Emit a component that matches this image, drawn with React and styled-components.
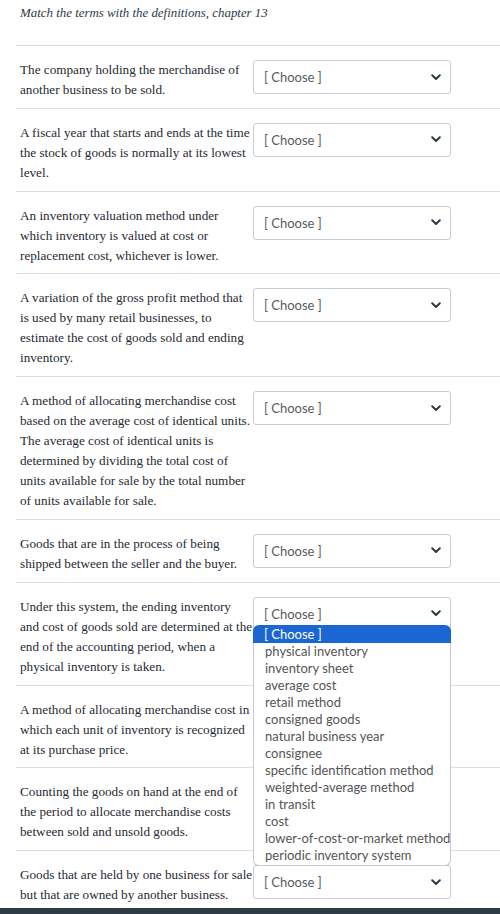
import React from "react";
import styled, { createGlobalStyle } from "styled-components";

const Global = createGlobalStyle`
  html, body { margin: 0; padding: 0; background: #fff; }
  body { font-family: "Liberation Serif", "Times New Roman", serif; color: #2d3b45; }
`;

const Page = styled.div`
  width: 500px;
  display: flex;
  flex-direction: column;
`;

const Title = styled.div`
  font-style: italic;
  font-size: 12.9px;
  line-height: 16px;
  padding: 5px 0 0 20px;
  height: 45px;
  box-sizing: border-box;
  color: #2d3b45;
`;

const List = styled.div`
  margin-left: 16px;
  display: flex;
  flex-direction: column;
`;

const Row = styled.div`
  border-top: 1px solid #dcdfe1;
  padding: 14px 0 ${(p) => (p.$last ? "3px" : "7.8px")} 4px;
  display: grid;
  grid-template-columns: 233px 198px;
  align-items: start;
`;

const Question = styled.div`
  font-size: 13.2px;
  line-height: 20px;
  color: #1f2a33;
`;

const SelectWrap = styled.div`
  position: relative;
`;

const SelectBox = styled.div`
  height: 34px;
  box-sizing: border-box;
  border: 1px solid #c7cdd1;
  border-radius: 3px;
  background: #fff;
  display: flex;
  align-items: center;
  justify-content: space-between;
  padding: 0 9px 0 10px;
  font-family: Lato, "Noto Sans", sans-serif;
  font-size: 13px;
  color: #5a5a5a;
`;

const Chevron = styled.svg`
  width: 10px;
  height: 7px;
  flex: none;
`;

const Menu = styled.ul`
  position: absolute;
  top: 28px;
  left: 0;
  width: 198px;
  margin: 0;
  padding: 0 0 1px 0;
  list-style: none;
  background: #fff;
  border: 1px solid #c9c9c9;
  border-top: none;
  border-radius: 6px;
  box-sizing: border-box;
  z-index: 5;
  font-family: Lato, "Noto Sans", sans-serif;
  font-size: 13px;
`;

const Option = styled.li`
  height: ${(p) => (p.$active ? 18 : 17)}px;
  line-height: ${(p) => (p.$active ? 18 : 17)}px;
  padding-left: 11px;
  white-space: nowrap;
  color: ${(p) => (p.$active ? "#fff" : "#555")};
  background: ${(p) => (p.$active ? "#1a66d2" : "transparent")};
  border-radius: ${(p) => (p.$active ? "6px 6px 0 0" : "0")};
  margin: ${(p) => (p.$active ? "0 -1px" : "0")};
`;

const Footer = styled.div`
  height: 40px;
  background: #2d3b45;
`;

const options = [
  "[ Choose ]",
  "physical inventory",
  "inventory sheet",
  "average cost",
  "retail method",
  "consigned goods",
  "natural business year",
  "consignee",
  "specific identification method",
  "weighted-average method",
  "in transit",
  "cost",
  "lower-of-cost-or-market method",
  "periodic inventory system",
];

const questions = [
  "The company holding the merchandise of another business to be sold.",
  "A fiscal year that starts and ends at the time the stock of goods is normally at its lowest level.",
  "An inventory valuation method under which inventory is valued at cost or replacement cost, whichever is lower.",
  "A variation of the gross profit method that is used by many retail businesses, to estimate the cost of goods sold and ending inventory.",
  "A method of allocating merchandise cost based on the average cost of identical units. The average cost of identical units is determined by dividing the total cost of units available for sale by the total number of units available for sale.",
  "Goods that are in the process of being shipped between the seller and the buyer.",
  "Under this system, the ending inventory and cost of goods sold are determined at the end of the accounting period, when a physical inventory is taken.",
  "A method of allocating merchandise cost in which each unit of inventory is recognized at its purchase price.",
  "Counting the goods on hand at the end of the period to allocate merchandise costs between sold and unsold goods.",
  "Goods that are held by one business for sale but that are owned by another business.",
];

function Select({ open }) {
  return (
    <SelectWrap>
      <SelectBox>
        <span>[ Choose ]</span>
        <Chevron viewBox="0 0 10 7">
          <path d="M1.2 1.3 L5 5 L8.8 1.3" fill="none" stroke="#2d3b45" strokeWidth="2" strokeLinecap="round" strokeLinejoin="round" />
        </Chevron>
      </SelectBox>
      {open && (
        <Menu>
          {options.map((o, i) => (
            <Option key={o} $active={i === 0}>{o}</Option>
          ))}
        </Menu>
      )}
    </SelectWrap>
  );
}

export default function App() {
  return (
    <Page>
      <Global />
      <Title>Match the terms with the definitions, chapter 13</Title>
      <List>
        {questions.map((q, i) => (
          <Row key={i} $last={i === questions.length - 1}>
            <Question>{q}</Question>
            <Select open={i === 6} />
          </Row>
        ))}
      </List>
      <Footer />
    </Page>
  );
}
